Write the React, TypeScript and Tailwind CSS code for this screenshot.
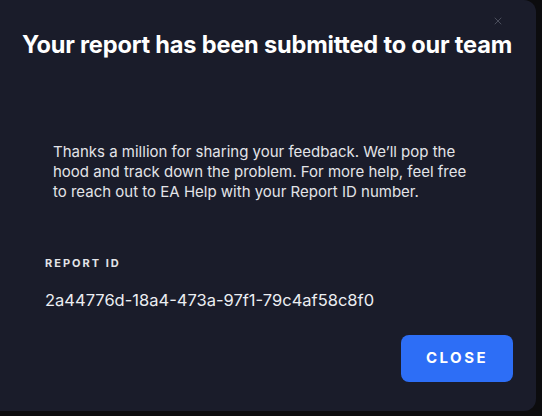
import { X } from 'lucide-react';

export default function App() {
  return (
    <div className="w-[542px] h-[416px] bg-[#0c0c0e] overflow-hidden" style={{ fontFamily: 'Inter, "Liberation Sans", sans-serif' }}>
      <div className="relative w-[536px] h-[411px] bg-[#1a1c2a] rounded-r-xl flex flex-col">
        {/* close icon */}
        <button className="absolute right-[32px] top-[15px] text-[#4b4e5c]">
          <X className="w-3 h-3" strokeWidth={2} />
        </button>

        <h1 className="pl-[22px] pt-[30px] text-[23.6px] leading-[30px] font-bold text-white tracking-[-0.2px]">
          Your report has been submitted to our team
        </h1>

        <p className="pl-[53px] pr-[60px] mt-[82px] text-[15px] leading-[20px] text-[#e3e4e8]">
          Thanks a million for sharing your feedback. We’ll pop the hood and track down the problem. For more help, feel free to reach out to EA Help with your Report ID number.
        </p>

        <div className="pl-[45px] mt-[53px]">
          <div className="text-[11px] font-bold tracking-[2px] text-[#e3e4e8]">REPORT ID</div>
          <div className="mt-[16px] text-[16.5px] text-[#eceef2]">2a44776d-18a4-473a-97f1-79c4af58c8f0</div>
        </div>

        <div className="flex justify-end pr-[23px] mt-auto mb-[29px]">
          <button className="w-[112px] h-[47px] rounded-lg bg-[#2d6ef6] text-white text-[15px] font-bold tracking-[2.5px]">
            CLOSE
          </button>
        </div>
      </div>
    </div>
  );
}
